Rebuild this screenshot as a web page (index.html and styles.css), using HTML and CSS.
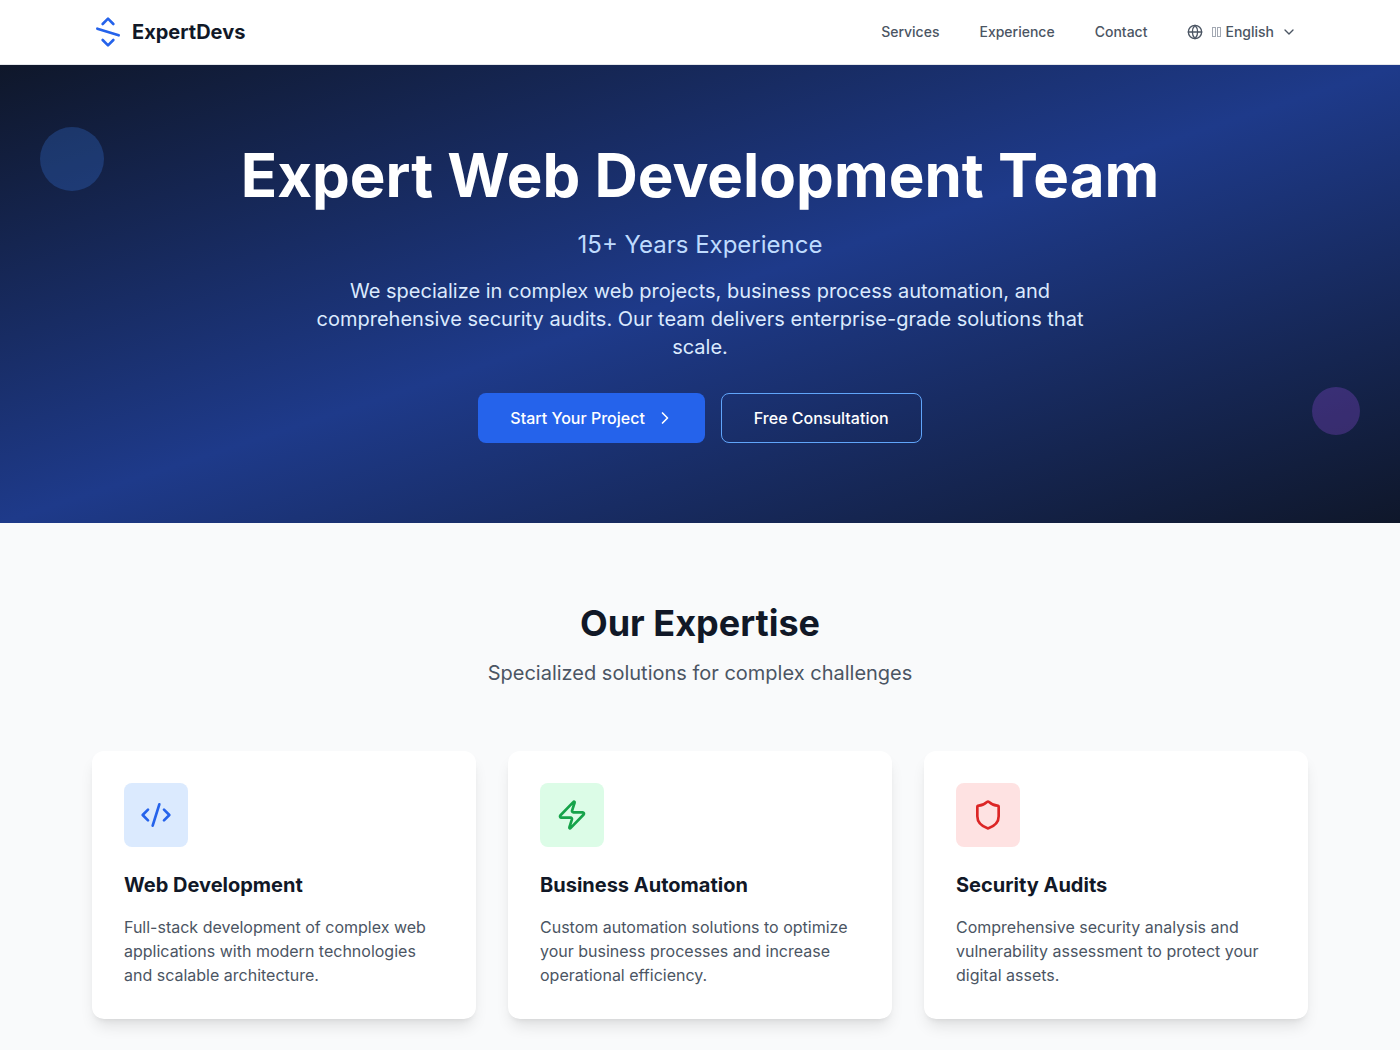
FILE: index.html
```html
<!DOCTYPE html>
<html lang="en">
<head>
<meta charset="utf-8">
<title>ExpertDevs</title>
<link rel="stylesheet" href="styles.css">
</head>
<body>
<header class="nav">
  <div class="nav-inner">
    <a class="brand" href="#">
      <svg class="brand-icon" viewBox="0 0 24 24" width="32" height="32"><path d="m18 16 4-4-4-4"/><path d="m6 8-4 4 4 4"/><path d="m14.5 4-5 16"/></svg>
      <span>ExpertDevs</span>
    </a>
    <nav class="nav-links">
      <a href="#">Services</a>
      <a href="#">Experience</a>
      <a href="#">Contact</a>
      <div class="lang">
        <svg class="icon" viewBox="0 0 24 24" width="16" height="16"><circle cx="12" cy="12" r="10"/><path d="M12 2a14.5 14.5 0 0 0 0 20 14.5 14.5 0 0 0 0-20"/><path d="M2 12h20"/></svg>
        <span class="lang-label"><span class="tofu"><i></i><i></i></span>English</span>
        <svg class="icon" viewBox="0 0 24 24" width="16" height="16"><path d="m6 9 6 6 6-6"/></svg>
      </div>
    </nav>
  </div>
</header>
<section class="hero">
  <span class="orb orb-blue"></span>
  <span class="orb orb-purple"></span>
  <h1>Expert Web Development Team</h1>
  <p class="hero-sub">15+ Years Experience</p>
  <p class="hero-text">We specialize in complex web projects, business process automation, and comprehensive security audits. Our team delivers enterprise-grade solutions that scale.</p>
  <div class="hero-actions">
    <a class="btn btn-primary" href="#">Start Your Project
      <svg class="btn-arrow" viewBox="0 0 24 24" width="20" height="20"><path d="m9 18 6-6-6-6"/></svg>
    </a>
    <a class="btn btn-outline" href="#">Free Consultation</a>
  </div>
</section>
<section class="expertise">
  <h2>Our Expertise</h2>
  <p class="expertise-sub">Specialized solutions for complex challenges</p>
  <div class="cards">
    <article class="card">
      <div class="card-icon tint-blue">
        <svg viewBox="0 0 24 24" width="32" height="32"><path d="m18 16 4-4-4-4"/><path d="m6 8-4 4 4 4"/><path d="m14.5 4-5 16"/></svg>
      </div>
      <h3>Web Development</h3>
      <p>Full-stack development of complex web applications with modern technologies and scalable architecture.</p>
    </article>
    <article class="card">
      <div class="card-icon tint-green">
        <svg viewBox="0 0 24 24" width="32" height="32"><path d="M4 14a1 1 0 0 1-.78-1.63l9.9-10.2a.5.5 0 0 1 .86.46l-1.92 6.02A1 1 0 0 0 13 10h7a1 1 0 0 1 .78 1.63l-9.9 10.2a.5.5 0 0 1-.86-.46l1.92-6.02A1 1 0 0 0 11 14z"/></svg>
      </div>
      <h3>Business Automation</h3>
      <p>Custom automation solutions to optimize your business processes and increase operational efficiency.</p>
    </article>
    <article class="card">
      <div class="card-icon tint-red">
        <svg viewBox="0 0 24 24" width="32" height="32"><path d="M20 13c0 5-3.5 7.5-7.66 8.95a1 1 0 0 1-.67-.01C7.5 20.5 4 18 4 13V6a1 1 0 0 1 1-1c2 0 4.5-1.2 6.24-2.72a1.17 1.17 0 0 1 1.52 0C14.51 3.81 17 5 19 5a1 1 0 0 1 1 1z"/></svg>
      </div>
      <h3>Security Audits</h3>
      <p>Comprehensive security analysis and vulnerability assessment to protect your digital assets.</p>
    </article>
  </div>
</section>
</body>
</html>
```
FILE: styles.css
```css
* { box-sizing: border-box; }
html, body { margin: 0; padding: 0; }
body {
  font-family: Inter, "Liberation Sans", sans-serif;
  background: #f9fafb;
  color: #111827;
}
a { color: inherit; text-decoration: none; }
svg { fill: none; stroke: currentColor; stroke-width: 2; stroke-linecap: round; stroke-linejoin: round; display: block; flex: none; }

.nav { background: #fff; border-bottom: 1px solid #e5e7eb; }
.nav-inner {
  max-width: 1280px;
  height: 64px;
  margin: 0 auto;
  padding: 0 32px;
  display: flex;
  align-items: center;
  justify-content: space-between;
}
.brand { display: flex; align-items: center; gap: 8px; font-size: 20px; font-weight: 700; line-height: 28px; }
.brand-icon { color: #2563eb; transform: rotate(90deg); }
.nav-links { display: flex; align-items: center; gap: 40px; font-size: 14px; font-weight: 500; line-height: 20px; color: #4b5563; }
.lang { display: flex; align-items: center; gap: 8px; padding-right: 11px; }
.lang-label { display: flex; align-items: center; gap: 4px; margin: 0 -1px 0 1px; }
.tofu { display: flex; gap: 1px; }
.tofu i { display: block; width: 4px; height: 10px; border: 1px solid #a3a9b3; }

.hero {
  position: relative;
  overflow: hidden;
  padding: 80px 32px;
  text-align: center;
  color: #fff;
  background: linear-gradient(to bottom right, #0f172a 0%, #1e3a8a 50%, #0f172a 100%);
}
.orb { position: absolute; border-radius: 50%; }
.orb-blue { width: 64px; height: 64px; left: 40px; top: 62px; background: rgba(59, 130, 246, 0.25); }
.orb-purple { width: 48px; height: 48px; right: 40px; bottom: 88px; background: rgba(168, 85, 247, 0.25); }
.hero h1 { margin: 0 0 24px; font-size: 60px; line-height: 60px; font-weight: 700; }
.hero-sub { margin: 0 0 16px; font-size: 24px; line-height: 32px; color: #bfdbfe; }
.hero-text { max-width: 768px; margin: 0 auto 32px; font-size: 20px; line-height: 28px; color: #dbeafe; }
.hero-actions { display: flex; justify-content: center; gap: 16px; }
.btn {
  display: flex;
  align-items: center;
  gap: 8px;
  height: 50px;
  padding: 0 32px;
  border-radius: 8px;
  font-size: 16px;
  font-weight: 500;
  line-height: 24px;
}
.btn-primary { background: #2563eb; }
.btn-outline { border: 1px solid #60a5fa; }
.btn-arrow { margin-left: 2px; margin-right: -2px; }

.expertise { padding: 80px 0 31px; text-align: center; }
.expertise h2 { margin: 0 0 16px; font-size: 36px; line-height: 40px; font-weight: 700; }
.expertise-sub { margin: 0 0 64px; font-size: 20px; line-height: 28px; color: #4b5563; }
.cards {
  max-width: 1280px;
  margin: 0 auto;
  padding: 0 32px;
  display: grid;
  grid-template-columns: repeat(3, 1fr);
  gap: 32px;
  text-align: left;
}
.card {
  background: #fff;
  border-radius: 12px;
  padding: 32px;
  box-shadow: 0 10px 15px -3px rgba(0, 0, 0, 0.1), 0 4px 6px -4px rgba(0, 0, 0, 0.1);
}
.card-icon { width: 64px; height: 64px; border-radius: 8px; margin-bottom: 24px; display: flex; align-items: center; justify-content: center; }
.tint-blue { background: #dbeafe; color: #2563eb; }
.tint-green { background: #dcfce7; color: #16a34a; }
.tint-red { background: #fee2e2; color: #dc2626; }
.card h3 { margin: 0 0 16px; font-size: 20px; line-height: 28px; font-weight: 700; }
.card p { margin: 0; font-size: 16px; line-height: 24px; color: #4b5563; }
```
